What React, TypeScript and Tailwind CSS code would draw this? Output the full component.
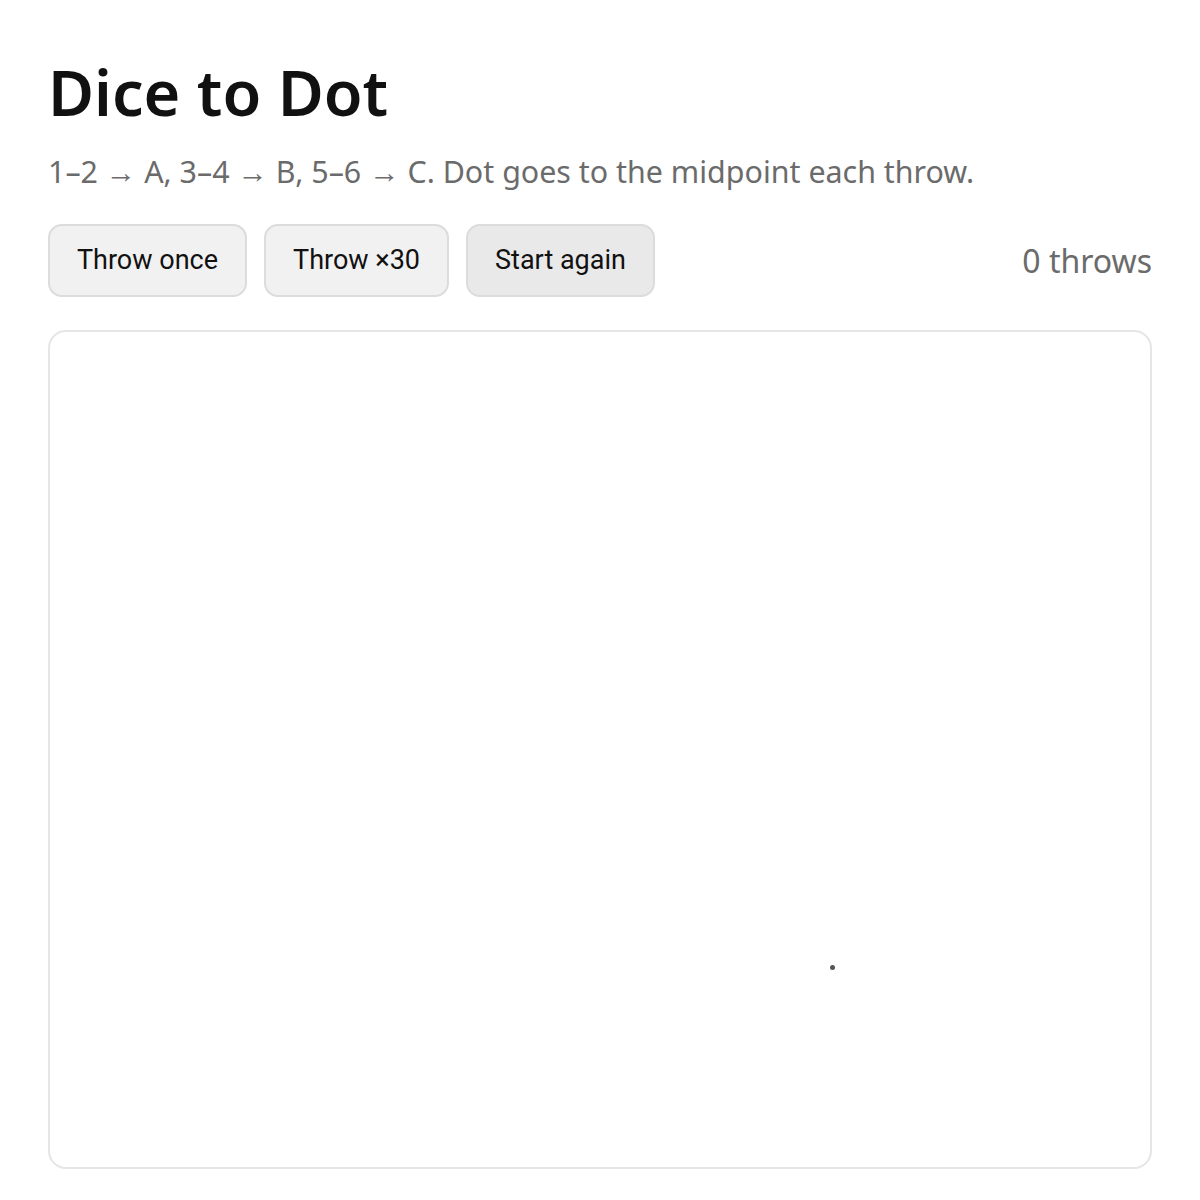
import React, { useState } from 'react';

const buttonClass =
  "h-[73px] rounded-[14px] border-2 border-[#dcdcdc] px-[27px] text-[27px] text-[#111] bg-[#f1f1f1] font-['Roboto',sans-serif]";

export default function App() {
  const [throws, setThrows] = useState(0);

  return (
    <div className="min-h-[1200px] bg-white px-[48px] pt-[54px] font-['Noto_Sans',sans-serif]">
      <h1 className="text-[63px] font-semibold leading-[76px] text-[#111]">Dice to Dot</h1>
      <p className="mt-[22px] text-[30.4px] leading-[40px] text-[#6b6b6b]">
        1–2 → A, 3–4 → B, 5–6 → C. Dot goes to the midpoint each throw.
      </p>

      <div className="mt-[32px] flex items-center gap-[17px]">
        <button className={buttonClass} onClick={() => setThrows((t) => t + 1)}>
          Throw once
        </button>
        <button className={buttonClass} onClick={() => setThrows((t) => t + 30)}>
          Throw ×30
        </button>
        <button
          className="h-[73px] rounded-[14px] border-2 border-[#dcdcdc] bg-[#e9e9e9] px-[27px] text-[27px] text-[#111] font-['Roboto',sans-serif]"
          onClick={() => setThrows(0)}
        >
          Start again
        </button>
        <span className="ml-auto text-[32px] text-[#6b6b6b]">{throws} throws</span>
      </div>

      <div className="relative mt-[33px] h-[839px] rounded-[18px] border-2 border-[#e6e6e6]">
        {/* current dot */}
        <span className="absolute left-[780px] top-[633px] h-[5px] w-[5px] rounded-full bg-[#555]" />
      </div>
    </div>
  );
}
